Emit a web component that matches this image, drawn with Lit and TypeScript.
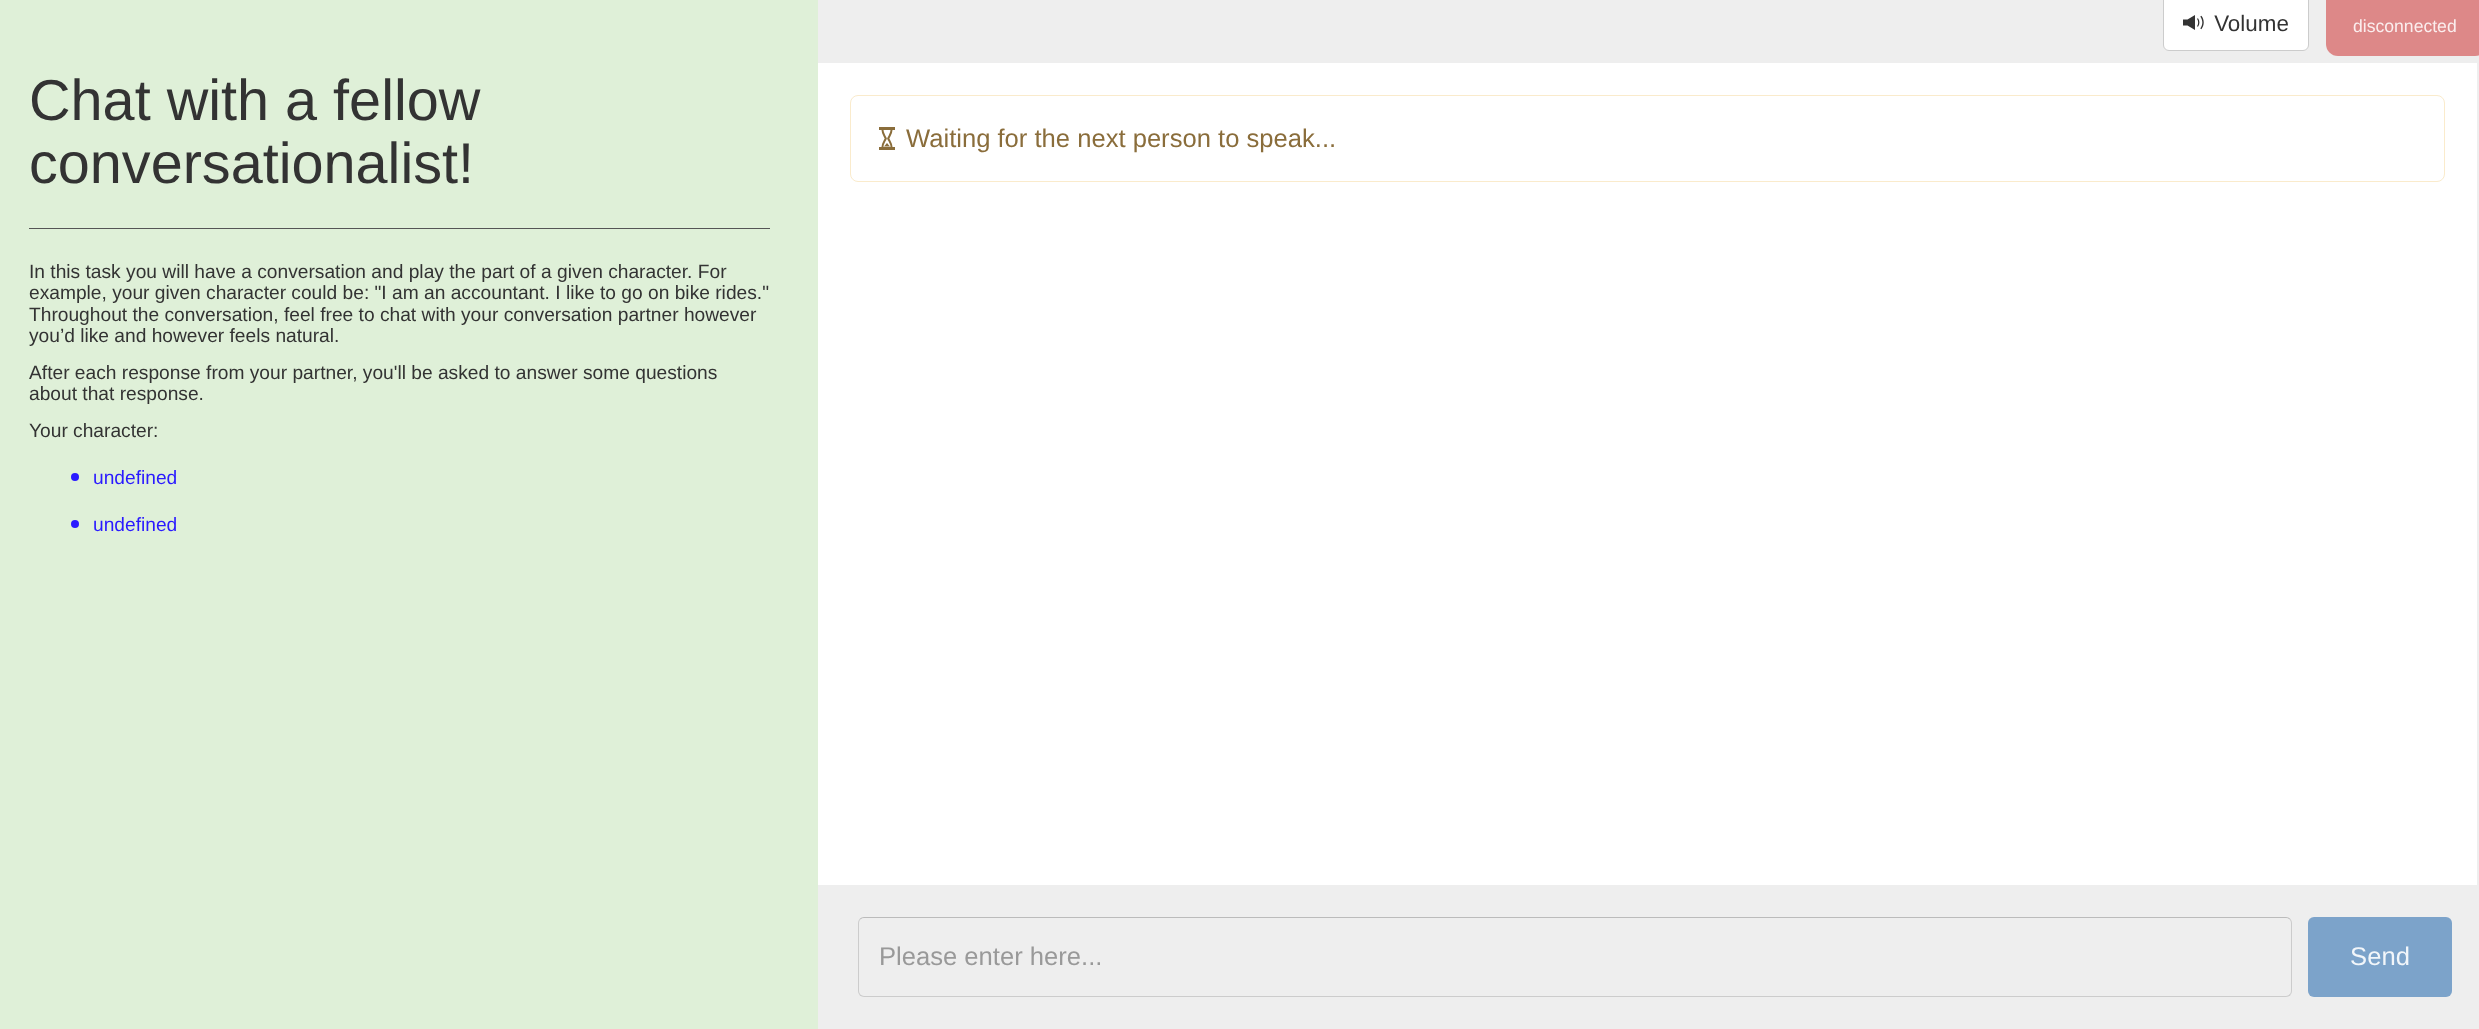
import { LitElement, html, css } from "lit";
import { customElement } from "lit/decorators.js";

@customElement("app-root")
export class AppRoot extends LitElement {
  static styles = css`
    :host { display: block; width: 2479px; height: 1029px; overflow: hidden; font-family: "Liberation Sans", Arial, sans-serif; color: #333; text-rendering: geometricPrecision; }
    * { box-sizing: border-box; }
    .page { display: flex; height: 1029px; will-change: transform; }
    .left { width: 818px; flex: none; background: #dff0d8; padding: 0 48px 0 29px; }
    h1 { margin: 69.5px 0 0; font-size: 57.6px; line-height: 63.36px; font-weight: 400; color: #333; }
    hr { margin: 31.5px 0 0; border: 0; border-top: 1px solid #555; height: 1px; }
    p { margin: 33px 0 0; font-size: 19.2px; line-height: 21.4px; color: #333; }
    p + p { margin-top: 15.5px; }
    ul { margin: 12px 0 0; padding: 0 0 0 42px; list-style: none; color: #2a1aff; font-size: 19.2px; line-height: 21px; }
    li { display: flex; align-items: center; gap: 14px; height: 47px; }
    .dot { width: 8px; height: 8px; margin-top: -3px; border-radius: 50%; background: #2a1aff; }
    .right { flex: 1; display: flex; flex-direction: column; background: #eee; min-width: 0; }
    .top { height: 63px; flex: none; display: flex; justify-content: flex-end; align-items: flex-start; gap: 17px; }
    .vol { width: 146px; height: 60px; margin-top: -9px; background: #fff; border: 1px solid #ccc; border-radius: 6px; display: flex; align-items: center; justify-content: center; gap: 10px; font-size: 22.4px; color: #333; padding-top: 6px; }
    .vol svg { margin-top: -3px; flex: none; }
    .status { width: 161px; height: 71px; margin: -15px -8px 0 0; background: #dd8888; border-radius: 12px; color: #fbeeee; font-size: 17.6px; display: flex; align-items: center; padding: 11px 0 0 27px; flex: none; }
    .main { flex: 1; background: #fff; margin-right: 2px; padding: 32px; }
    .alert { height: 87px; border: 1px solid #faebcc; border-radius: 8px; color: #8a6d3b; font-size: 25.6px; display: flex; align-items: center; gap: 11px; padding: 1px 0 0 28px; }
    .alert svg { margin-top: -1px; flex: none; }
    .bottom { height: 144px; flex: none; display: flex; gap: 16px; padding: 32px 27px 0 40px; }
    .input { flex: 1; height: 80px; border: 1px solid #ccc; border-top-color: #bbb; border-radius: 6px; background: #eee; color: #999; font-size: 25.6px; display: flex; align-items: center; padding: 1px 20px 0; }
    .send { width: 144px; height: 80px; border-radius: 6px; background: #7ca3ca; color: #f2f6fa; font-size: 25.6px; display: flex; align-items: center; justify-content: center; padding-top: 1px; }
  `;

  render() {
    return html`
      <div class="page">
        <section class="left">
          <h1>Chat with a fellow conversationalist!</h1>
          <hr />
          <p>In this task you will have a conversation and play the part of a given character. For example, your given character could be: "I am an accountant. I like to go on bike rides." Throughout the conversation, feel free to chat with your conversation partner however you’d like and however feels natural.</p>
          <p>After each response from your partner, you'll be asked to answer some questions about that response.</p>
          <p>Your character:</p>
          <ul>
            <li><span class="dot"></span>undefined</li>
            <li><span class="dot"></span>undefined</li>
          </ul>
        </section>
        <section class="right">
          <div class="top">
            <div class="vol">
              <svg width="21" height="15" viewBox="0 0 21 15" fill="#333"><path d="M0 4.500h4.500L12 0v15l-7.500-4.500H0z"/><path d="M14 3.800c1.500 2.200 1.500 5.200 0 7.400l1 .6c1.900-2.600 1.900-6 0-8.600z"/><path d="M17.300 1.500c2.700 3.600 2.700 8.400 0 12l1.100.7c3.100-4.100 3.100-9.300 0-13.400z"/></svg>
              <span>Volume</span>
            </div>
            <div class="status">disconnected</div>
          </div>
          <div class="main">
            <div class="alert">
              <svg width="16" height="23" viewBox="0 0 16 23" fill="none" stroke="#8a6d3b"><path d="M0 1.500h16M0 21.500h16" stroke-width="3"/><path d="M3.500 3c0 3.500 2 5.500 3.300 8.500-1.300 3-3.300 5-3.300 8.500M12.500 3c0 3.500-2 5.500-3.300 8.500 1.300 3 3.300 5 3.300 8.500" stroke-width="2"/><path d="M5 19.500h6L8 16z" fill="#8a6d3b" stroke="none"/></svg>
              <span>Waiting for the next person to speak...</span>
            </div>
          </div>
          <div class="bottom">
            <div class="input">Please enter here...</div>
            <div class="send">Send</div>
          </div>
        </section>
      </div>
    `;
  }
}
